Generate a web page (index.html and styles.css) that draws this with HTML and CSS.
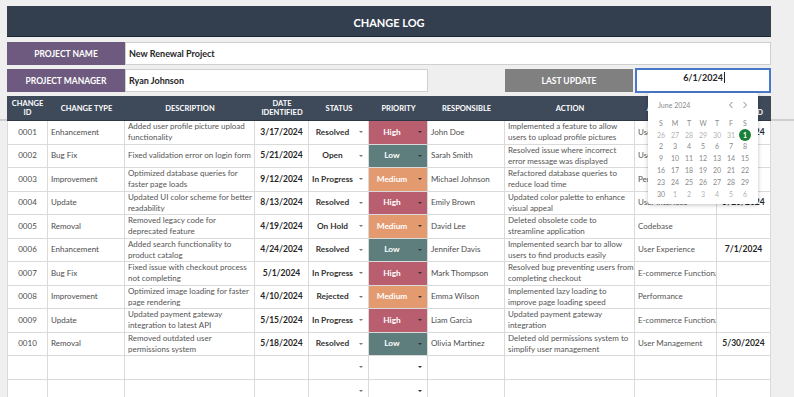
FILE: index.html
```html
<!DOCTYPE html>
<html lang="en">
<head>
<meta charset="utf-8">
<title>Change Log</title>
<link rel="stylesheet" href="styles.css">
</head>
<body>
<div class="page">
  <div class="freeze-line"></div>
  <div class="sheet">
    <div class="title">CHANGE LOG</div>
    <div class="info-row">
      <div class="label purple">PROJECT NAME</div>
      <div class="value grow">New Renewal Project</div>
    </div>
    <div class="info-row">
      <div class="label purple">PROJECT MANAGER</div>
      <div class="value manager">Ryan Johnson</div>
      <div class="gap"></div>
      <div class="label gray">LAST UPDATE</div>
      <div class="value date-input">6/1/2024<span class="caret"></span></div>
    </div>
    <div class="table">
      <div class="th">CHANGE<br>ID</div>
      <div class="th">CHANGE TYPE</div>
      <div class="th">DESCRIPTION</div>
      <div class="th">DATE<br>IDENTIFIED</div>
      <div class="th">STATUS</div>
      <div class="th">PRIORITY</div>
      <div class="th">RESPONSIBLE</div>
      <div class="th">ACTION</div>
      <div class="th">AFFECTED AREA</div>
      <div class="th">DATE<br>RESOLVED</div>

      <div class="td id">0001</div><div class="td">Enhancement</div><div class="td desc">Added user profile picture upload<br>functionality</div><div class="td date">3/17/2024</div><div class="td status">Resolved<i class="dd"></i></div><div class="td prio high">High<i class="dd"></i></div><div class="td">John Doe</div><div class="td desc">Implemented a feature to allow<br>users to upload profile pictures</div><div class="td area">User Interface</div><div class="td date">3/28/2024</div>

      <div class="td id">0002</div><div class="td">Bug Fix</div><div class="td desc">Fixed validation error on login form</div><div class="td date">5/21/2024</div><div class="td status">Open<i class="dd"></i></div><div class="td prio low">Low<i class="dd"></i></div><div class="td">Sarah Smith</div><div class="td desc">Resolved issue where incorrect<br>error message was displayed</div><div class="td area">User Experience</div><div class="td date"></div>

      <div class="td id">0003</div><div class="td">Improvement</div><div class="td desc">Optimized database queries for<br>faster page loads</div><div class="td date">9/12/2024</div><div class="td status">In Progress<i class="dd"></i></div><div class="td prio medium">Medium<i class="dd"></i></div><div class="td">Michael Johnson</div><div class="td desc">Refactored database queries to<br>reduce load time</div><div class="td area">Performance</div><div class="td date"></div>

      <div class="td id">0004</div><div class="td">Update</div><div class="td desc">Updated UI color scheme for better<br>readability</div><div class="td date">8/13/2024</div><div class="td status">Resolved<i class="dd"></i></div><div class="td prio high">High<i class="dd"></i></div><div class="td">Emily Brown</div><div class="td desc">Updated color palette to enhance<br>visual appeal</div><div class="td area">User Interface</div><div class="td date">5/20/2024</div>

      <div class="td id">0005</div><div class="td">Removal</div><div class="td desc">Removed legacy code for<br>deprecated feature</div><div class="td date">4/19/2024</div><div class="td status">On Hold<i class="dd"></i></div><div class="td prio medium">Medium<i class="dd"></i></div><div class="td">David Lee</div><div class="td desc">Deleted obsolete code to<br>streamline application</div><div class="td area">Codebase</div><div class="td date"></div>

      <div class="td id">0006</div><div class="td">Enhancement</div><div class="td desc">Added search functionality to<br>product catalog</div><div class="td date">4/24/2024</div><div class="td status">Resolved<i class="dd"></i></div><div class="td prio low">Low<i class="dd"></i></div><div class="td">Jennifer Davis</div><div class="td desc">Implemented search bar to allow<br>users to find products easily</div><div class="td area">User Experience</div><div class="td date">7/1/2024</div>

      <div class="td id">0007</div><div class="td">Bug Fix</div><div class="td desc">Fixed issue with checkout process<br>not completing</div><div class="td date">5/1/2024</div><div class="td status">In Progress<i class="dd"></i></div><div class="td prio high">High<i class="dd"></i></div><div class="td">Mark Thompson</div><div class="td desc">Resolved bug preventing users from<br>completing checkout</div><div class="td area">E-commerce Functionality</div><div class="td date"></div>

      <div class="td id">0008</div><div class="td">Improvement</div><div class="td desc">Optimized image loading for faster<br>page rendering</div><div class="td date">4/10/2024</div><div class="td status">Rejected<i class="dd"></i></div><div class="td prio medium">Medium<i class="dd"></i></div><div class="td">Emma Wilson</div><div class="td desc">Implemented lazy loading to<br>improve page loading speed</div><div class="td area">Performance</div><div class="td date"></div>

      <div class="td id">0009</div><div class="td">Update</div><div class="td desc">Updated payment gateway<br>integration to latest API</div><div class="td date">5/15/2024</div><div class="td status">In Progress<i class="dd"></i></div><div class="td prio high">High<i class="dd"></i></div><div class="td">Liam Garcia</div><div class="td desc">Updated payment gateway<br>integration</div><div class="td area">E-commerce Functionality</div><div class="td date"></div>

      <div class="td id">0010</div><div class="td">Removal</div><div class="td desc">Removed outdated user<br>permissions system</div><div class="td date">5/18/2024</div><div class="td status">Resolved<i class="dd"></i></div><div class="td prio low">Low<i class="dd"></i></div><div class="td">Olivia Martinez</div><div class="td desc">Deleted old permissions system to<br>simplify user management</div><div class="td area">User Management</div><div class="td date">5/30/2024</div>

      <div class="td id"></div><div class="td"></div><div class="td desc"></div><div class="td date"></div><div class="td status"><i class="dd"></i></div><div class="td prio"><i class="dd"></i></div><div class="td"></div><div class="td desc"></div><div class="td area"></div><div class="td date"></div>

      <div class="td id"></div><div class="td"></div><div class="td desc"></div><div class="td date"></div><div class="td status"><i class="dd"></i></div><div class="td prio"><i class="dd"></i></div><div class="td"></div><div class="td desc"></div><div class="td area"></div><div class="td date"></div>
    </div>
  </div>

  <div class="calendar">
    <div class="cal-head">
      <span class="cal-month">June 2024</span>
      <span class="cal-nav">
        <svg width="6" height="8" viewBox="0 0 6 8"><path d="M4.5 1 L1.5 4 L4.5 7" fill="none" stroke="#8a8a8a" stroke-width="1"/></svg>
        <svg width="6" height="8" viewBox="0 0 6 8"><path d="M1.5 1 L4.5 4 L1.5 7" fill="none" stroke="#8a8a8a" stroke-width="1"/></svg>
      </span>
    </div>
    <div class="cal-grid">
      <span class="dow">S</span><span class="dow">M</span><span class="dow">T</span><span class="dow">W</span><span class="dow">T</span><span class="dow">F</span><span class="dow">S</span>
      <span class="o">26</span><span class="o">27</span><span class="o">28</span><span class="o">29</span><span class="o">30</span><span class="o">31</span><span class="sel">1</span>
      <span>2</span><span>3</span><span>4</span><span>5</span><span>6</span><span>7</span><span>8</span>
      <span>9</span><span>10</span><span>11</span><span>12</span><span>13</span><span>14</span><span>15</span>
      <span>16</span><span>17</span><span>18</span><span>19</span><span>20</span><span>21</span><span>22</span>
      <span>23</span><span>24</span><span>25</span><span>26</span><span>27</span><span>28</span><span>29</span>
      <span>30</span><span class="o">1</span><span class="o">2</span><span class="o">3</span><span class="o">4</span><span class="o">5</span><span class="o">6</span>
    </div>
  </div>
</div>
</body>
</html>
```

FILE: styles.css
```css
* { box-sizing: border-box; }
html, body { margin: 0; padding: 0; }
body {
  background: #efefef;
  font-family: Lato, "Open Sans", sans-serif;
  color: #4a4a4a;
  width: 794px;
  height: 397px;
  overflow: hidden;
}
.page {
  position: relative;
  width: 794px;
  height: 397px;
  padding: 6px 0 0 7px;
}
.freeze-line {
  position: absolute;
  left: 0;
  right: 0;
  top: 119px;
  height: 2px;
  background: #cfcfcf;
}
.sheet {
  position: relative;
  width: 764px;
}
.title {
  height: 31px;
  padding-top: 2px;
  background: #333f4f;
  border-bottom: 1px solid #1f2733;
  color: #fff;
  font-weight: 700;
  font-size: 11px;
  display: flex;
  align-items: center;
  justify-content: center;
}
.info-row {
  display: flex;
  height: 23px;
  margin-top: 4px;
}
.title + .info-row { margin-top: 5px; }
.label {
  width: 118px;
  display: flex;
  align-items: center;
  justify-content: center;
  color: #fff;
  font-weight: 700;
  font-size: 8.5px;
}
.purple { background: #6d5a7e; }
.gray { background: #808080; width: 128px; }
.value {
  background: #fff;
  border: 1px solid #cfcfcf;
  display: flex;
  align-items: center;
  padding-left: 3px;
  font-weight: 700;
  font-size: 9px;
  color: #262626;
}
.grow { flex: 1; }
.manager { width: 303px; }
.gap { width: 77px; }
.date-input {
  margin-left: 2px;
  flex: 1;
  border: 2px solid #4a78c8;
  justify-content: center;
  padding-left: 2px;
  margin-top: -1px;
  height: 25px;
  align-items: flex-start;
  padding-top: 2px;
}
.caret {
  display: inline-block;
  width: 1px;
  height: 11px;
  background: #222;
  margin-left: 1px;
}
.table {
  margin-top: 4px;
  display: grid;
  grid-template-columns: 41px 77px 130px 54px 60px 59px 77px 130px 82px 54px;
  grid-template-rows: 25px;
  grid-auto-rows: 23.5px;
  background: #fff;
}
.th {
  background: #3e4a5a;
  color: #fff;
  font-weight: 700;
  font-size: 7.5px;
  line-height: 9px;
  text-align: center;
  display: flex;
  align-items: center;
  justify-content: center;
  border-bottom: 1px solid #2e3744;
}
.td {
  border-right: 1px solid #dadada;
  border-bottom: 1px solid #dadada;
  font-size: 8px;
  line-height: 11px;
  display: flex;
  align-items: center;
  padding: 0 0 0 3px;
  color: #4d4d4d;
  position: relative;
  overflow: hidden;
  white-space: nowrap;
}
.td:nth-child(10n+1) { border-left: 1px solid #dadada; }
.td.id { justify-content: center; padding: 0; }
.td.desc { color: #555; }
.td.date { justify-content: center; font-weight: 700; color: #262626; font-size: 8.5px; padding: 0; }
.td.status { justify-content: center; font-weight: 700; color: #333; padding: 0 12px 0 0; font-size: 8.3px; }
.td.prio { justify-content: center; font-weight: 700; color: #fff; padding: 0 12px 0 0; font-size: 8.3px; }
.td.area { color: #555; }
.high { background: #b85e6f; }
.low { background: #5e7e7e; }
.medium { background: #e39a6e; }
.dd {
  position: absolute;
  right: 5px;
  top: 50%;
  margin-top: -1px;
  width: 0;
  height: 0;
  border-left: 2px solid transparent;
  border-right: 2px solid transparent;
  border-top: 2.5px solid #777;
}
.prio .dd { border-top-color: #333; }

.calendar {
  position: absolute;
  left: 648px;
  top: 93px;
  width: 110px;
  height: 111px;
  background: #fff;
  box-shadow: 0 1px 4px rgba(0,0,0,0.25);
  border-radius: 2px;
  padding: 6px 6px 0 6px;
  font-size: 7px;
  color: #8a8a8a;
}
.cal-head {
  display: flex;
  align-items: center;
  justify-content: space-between;
  height: 12px;
  padding-left: 4px;
}
.cal-nav { display: flex; gap: 8px; padding-right: 4px; }
.cal-grid {
  margin-top: 6px;
  display: grid;
  grid-template-columns: repeat(7, 14px);
  grid-auto-rows: 11.8px;
  justify-items: center;
  align-items: center;
}
.cal-grid .o { color: #b3b3b3; }
.cal-grid .sel {
  width: 12px;
  height: 12px;
  border-radius: 50%;
  background: #1a7f37;
  color: #fff;
  font-weight: 700;
  display: flex;
  align-items: center;
  justify-content: center;
}
```
